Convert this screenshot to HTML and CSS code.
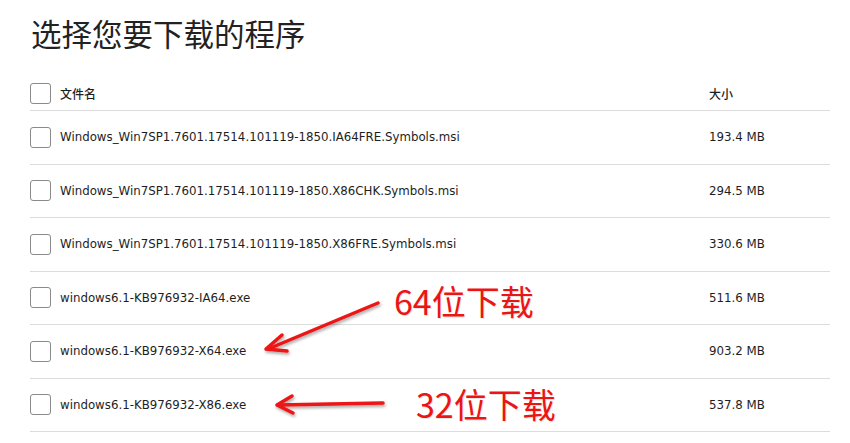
FILE: index.html
```html
<!doctype html>
<html lang="zh-CN">
<head>
    <meta charset="utf-8">
    <title>选择您要下载的程序</title>
    <link rel="stylesheet" href="styles.css">
</head>
<body>
    <div class="page">
        <h1>选择您要下载的程序</h1>
        <div class="table">
            <div class="row head">
                <span class="check"></span>
                <span class="name">文件名</span>
                <span class="size">大小</span>
            </div>
            <div class="row">
                <span class="check"></span>
                <span class="name">Windows_Win7SP1.7601.17514.101119-1850.IA64FRE.Symbols.msi</span>
                <span class="size">193.4 MB</span>
            </div>
            <div class="row">
                <span class="check"></span>
                <span class="name">Windows_Win7SP1.7601.17514.101119-1850.X86CHK.Symbols.msi</span>
                <span class="size">294.5 MB</span>
            </div>
            <div class="row">
                <span class="check"></span>
                <span class="name">Windows_Win7SP1.7601.17514.101119-1850.X86FRE.Symbols.msi</span>
                <span class="size">330.6 MB</span>
            </div>
            <div class="row">
                <span class="check"></span>
                <span class="name">windows6.1-KB976932-IA64.exe</span>
                <span class="size">511.6 MB</span>
            </div>
            <div class="row">
                <span class="check"></span>
                <span class="name">windows6.1-KB976932-X64.exe</span>
                <span class="size">903.2 MB</span>
            </div>
            <div class="row">
                <span class="check"></span>
                <span class="name">windows6.1-KB976932-X86.exe</span>
                <span class="size">537.8 MB</span>
            </div>
        </div>

        <!-- red annotations drawn over the list -->
        <div class="note note-64">64位下载</div>
        <div class="note note-32">32位下载</div>
        <svg class="arrows" width="850" height="443" viewBox="0 0 850 443">
            <defs>
                <filter id="shade" x="-10%" y="-50%" width="120%" height="200%">
                    <feDropShadow dx="1" dy="2" stdDeviation="1.5" flood-color="#000" flood-opacity="0.35"/>
                </filter>
            </defs>
            <g stroke="#ec1515" stroke-width="3.5" stroke-linecap="round" stroke-linejoin="round" fill="none" filter="url(#shade)">
                <path d="M378 303 L268 349"/>
                <path d="M282 335 L266 349 L287 351"/>
                <path d="M383 403 L278 405"/>
                <path d="M292 396 L277 405 L293 413"/>
            </g>
        </svg>
    </div>
</body>
</html>
```

FILE: styles.css
```css
body {
    margin: 0;
    background: #fff;
    color: #222;
    font-family: "DejaVu Sans", Verdana, "Noto Sans CJK SC", sans-serif;
}
.page {
    position: relative;
    width: 850px;
    height: 443px;
    padding: 0 20px 0 30px;
    box-sizing: border-box;
    overflow: hidden;
}
h1 {
    margin: 0 0 23px 0;
    padding: 13px 0 0 1px;
    font-family: "Noto Sans CJK SC", sans-serif;
    font-weight: 400;
    font-size: 30.5px;
    line-height: 40px;
    color: #222;
}
.table {
    width: 800px;
}
.row {
    display: flex;
    align-items: center;
    height: 53.5px;
    box-sizing: border-box;
    border-bottom: 1px solid #dcdcdc;
    font-size: 11.8px;
    color: #1e1e1e;
}
.row.head {
    height: 35px;
}
.head .name, .head .size {
    font-family: "Noto Sans CJK SC", sans-serif;
    font-weight: 500;
    font-size: 12px;
}
.check {
    width: 21px;
    height: 21px;
    box-sizing: border-box;
    border: 1px solid #8a8a8a;
    border-radius: 3px;
    flex: none;
}
.name {
    flex: 1;
    margin-left: 9px;
}
.size {
    width: 121px;
}
.note {
    position: absolute;
    font-family: "Noto Sans CJK SC", sans-serif;
    font-size: 34px;
    line-height: 1;
    color: #ec1515;
    text-shadow: 1px 1px 1px rgba(0, 0, 0, 0.12);
}
.note-64 {
    left: 394px;
    top: 284px;
}
.note-32 {
    left: 416px;
    top: 387px;
}
.arrows {
    position: absolute;
    left: 0;
    top: 0;
    pointer-events: none;
}
```
